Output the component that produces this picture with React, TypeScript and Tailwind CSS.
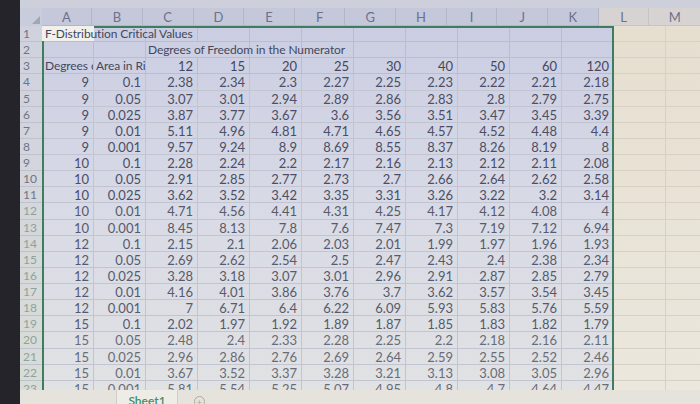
const cols = ["A", "B", "C", "D", "E", "F", "G", "H", "I", "J", "K"];

const data: string[][] = [
  ["9", "0.1", "2.38", "2.34", "2.3", "2.27", "2.25", "2.23", "2.22", "2.21", "2.18"],
  ["9", "0.05", "3.07", "3.01", "2.94", "2.89", "2.86", "2.83", "2.8", "2.79", "2.75"],
  ["9", "0.025", "3.87", "3.77", "3.67", "3.6", "3.56", "3.51", "3.47", "3.45", "3.39"],
  ["9", "0.01", "5.11", "4.96", "4.81", "4.71", "4.65", "4.57", "4.52", "4.48", "4.4"],
  ["9", "0.001", "9.57", "9.24", "8.9", "8.69", "8.55", "8.37", "8.26", "8.19", "8"],
  ["10", "0.1", "2.28", "2.24", "2.2", "2.17", "2.16", "2.13", "2.12", "2.11", "2.08"],
  ["10", "0.05", "2.91", "2.85", "2.77", "2.73", "2.7", "2.66", "2.64", "2.62", "2.58"],
  ["10", "0.025", "3.62", "3.52", "3.42", "3.35", "3.31", "3.26", "3.22", "3.2", "3.14"],
  ["10", "0.01", "4.71", "4.56", "4.41", "4.31", "4.25", "4.17", "4.12", "4.08", "4"],
  ["10", "0.001", "8.45", "8.13", "7.8", "7.6", "7.47", "7.3", "7.19", "7.12", "6.94"],
  ["12", "0.1", "2.15", "2.1", "2.06", "2.03", "2.01", "1.99", "1.97", "1.96", "1.93"],
  ["12", "0.05", "2.69", "2.62", "2.54", "2.5", "2.47", "2.43", "2.4", "2.38", "2.34"],
  ["12", "0.025", "3.28", "3.18", "3.07", "3.01", "2.96", "2.91", "2.87", "2.85", "2.79"],
  ["12", "0.01", "4.16", "4.01", "3.86", "3.76", "3.7", "3.62", "3.57", "3.54", "3.45"],
  ["12", "0.001", "7", "6.71", "6.4", "6.22", "6.09", "5.93", "5.83", "5.76", "5.59"],
  ["15", "0.1", "2.02", "1.97", "1.92", "1.89", "1.87", "1.85", "1.83", "1.82", "1.79"],
  ["15", "0.05", "2.48", "2.4", "2.33", "2.28", "2.25", "2.2", "2.18", "2.16", "2.11"],
  ["15", "0.025", "2.96", "2.86", "2.76", "2.69", "2.64", "2.59", "2.55", "2.52", "2.46"],
  ["15", "0.01", "3.67", "3.52", "3.37", "3.28", "3.21", "3.13", "3.08", "3.05", "2.96"],
  ["15", "0.001", "5.81", "5.54", "5.25", "5.07", "4.95", "4.8", "4.7", "4.64", "4.47"],
];

const rowNums = Array.from({ length: 23 }, (_, i) => i + 1);

// text fades a little toward the bottom of the photo
function tone(r: number) {
  if (r < 8) return "text-[#4a4e66]";
  if (r < 16) return "text-[#565a6b]";
  return "text-[#686c77]";
}

export default function App() {
  return (
    <div
      className="flex h-[404px] w-[700px] overflow-hidden bg-[#26262c] text-[13px] leading-[16px]"
      style={{ fontFamily: "Lato, 'Liberation Sans', sans-serif" }}
    >
      {/* monitor bezel */}
      <div className="w-[20px] shrink-0 bg-[#24242a]" />

      <div className="flex min-w-0 flex-1 flex-col">
        {/* formula bar edge */}
        <div className="h-[8px] shrink-0 bg-[#cdd0db]" />

        {/* column headers */}
        <div className="flex h-[18px] shrink-0 text-[#6d7189]">
          <div className="flex w-[22px] items-end justify-end bg-[#c9ccda] p-[2px]">
            <div className="h-0 w-0 border-b-[8px] border-l-[8px] border-b-[#a3a6b7] border-l-transparent" />
          </div>
          {cols.map((c) => (
            <div
              key={c}
              className="flex w-[52px] items-center justify-center border-r border-b border-[#b3b6c8] bg-[#c5c8da]"
            >
              {c}
            </div>
          ))}
          <div className="flex w-[52px] items-center justify-center border-r border-b border-[#c9c4c4] bg-[#d7d3d3]">
            L
          </div>
          <div className="flex w-[52px] items-center justify-center border-b border-[#c9c4c4] bg-[#d7d3d3]">
            M
          </div>
        </div>

        {/* sheet body */}
        <div className="flex min-h-0 flex-1 overflow-hidden">
          {/* row headers */}
          <div className="w-[22px] shrink-0 bg-linear-to-b from-[#cfd1de] to-[#d9ddd7]">
            {rowNums.map((n) => (
              <div
                key={n}
                className={`h-[16.14px] border-b border-[#bfc2ce] pl-[3px] text-[12px] ${
                  n < 12 ? "text-[#6f7389]" : "text-[#8fa19c]"
                }`}
              >
                {n}
              </div>
            ))}
          </div>

          {/* selected range A1:K */}
          <div className="relative w-[572px] shrink-0 bg-linear-to-b from-[#cbcee2] via-[#d8dae6] to-[#e1e2e3]">
            <div className="flex h-[16.14px] border-b border-[#babdd0] text-[12px] tracking-[-0.1px]">
              <div className="relative z-10 w-[52px] bg-[#f1f0ea] pl-[3px] whitespace-nowrap text-[#43475d]">
                F-Distribution Critical Values
              </div>
              {cols.slice(1).map((c) => (
                <div key={c} className="w-[52px] border-r border-[#babdd0]" />
              ))}
            </div>
            <div className="flex h-[16.14px] border-b border-[#babdd0] text-[12px] tracking-[-0.1px]">
              <div className="w-[52px] border-r border-[#babdd0]" />
              <div className="w-[52px] border-r border-[#babdd0]" />
              <div className="relative z-10 w-[52px] pl-[2px] whitespace-nowrap text-[#43475d]">
                Degrees of Freedom in the Numerator
              </div>
              {cols.slice(3).map((c) => (
                <div key={c} className="w-[52px] border-r border-[#babdd0]" />
              ))}
            </div>
            <div className="flex h-[16.14px] border-b border-[#babdd0] text-[#43475d]">
              <div className="w-[52px] overflow-hidden border-r border-[#babdd0] pl-[3px] text-[12px] tracking-[-0.1px] whitespace-nowrap">
                Degrees of Freedom
              </div>
              <div className="w-[52px] overflow-hidden border-r border-[#babdd0] pl-[2px] text-[12px] tracking-[-0.1px] whitespace-nowrap">
                Area in Right Tail
              </div>
              {["12", "15", "20", "25", "30", "40", "50", "60", "120"].map((v) => (
                <div key={v} className="w-[52px] border-r border-[#babdd0] pr-[4px] text-right">
                  {v}
                </div>
              ))}
            </div>
            {data.map((row, r) => (
              <div key={r} className={`flex h-[16.14px] border-b border-[#c2c5d1] ${tone(r)}`}>
                {row.map((v, i) => (
                  <div key={i} className="w-[52px] border-r border-[#c2c5d1] pr-[4px] text-right">
                    {v}
                  </div>
                ))}
              </div>
            ))}
            <div className="pointer-events-none absolute inset-0 border-x-2 border-t-2 border-[#3e7d60]" />
          </div>

          {/* empty columns L, M */}
          <div className="flex-1 bg-linear-to-b from-[#e6dfd0] to-[#ebe7dd]">
            {rowNums.map((n) => (
              <div key={n} className="flex h-[16.14px] border-b border-[#d8d1c3]">
                <div className="w-[52px] border-r border-[#d8d1c3]" />
                <div className="w-[52px]" />
              </div>
            ))}
          </div>
        </div>

        {/* sheet tabs */}
        <div className="flex h-[14px] shrink-0 items-start bg-[#e6e3dc]">
          <div className="w-[96px]" />
          <div className="flex h-full w-[62px] items-start justify-center border-x border-[#d2cec5] bg-[#eeece6] pt-[5px] text-[12px] leading-[12px] font-semibold text-[#3f8f6c]">
            Sheet1
          </div>
          <div className="ml-[16px] mt-[6px] flex h-[11px] w-[11px] items-center justify-center rounded-full border border-[#aeaaa2] text-[10px] leading-[10px] text-[#aeaaa2]">
            +
          </div>
        </div>
      </div>
    </div>
  );
}
